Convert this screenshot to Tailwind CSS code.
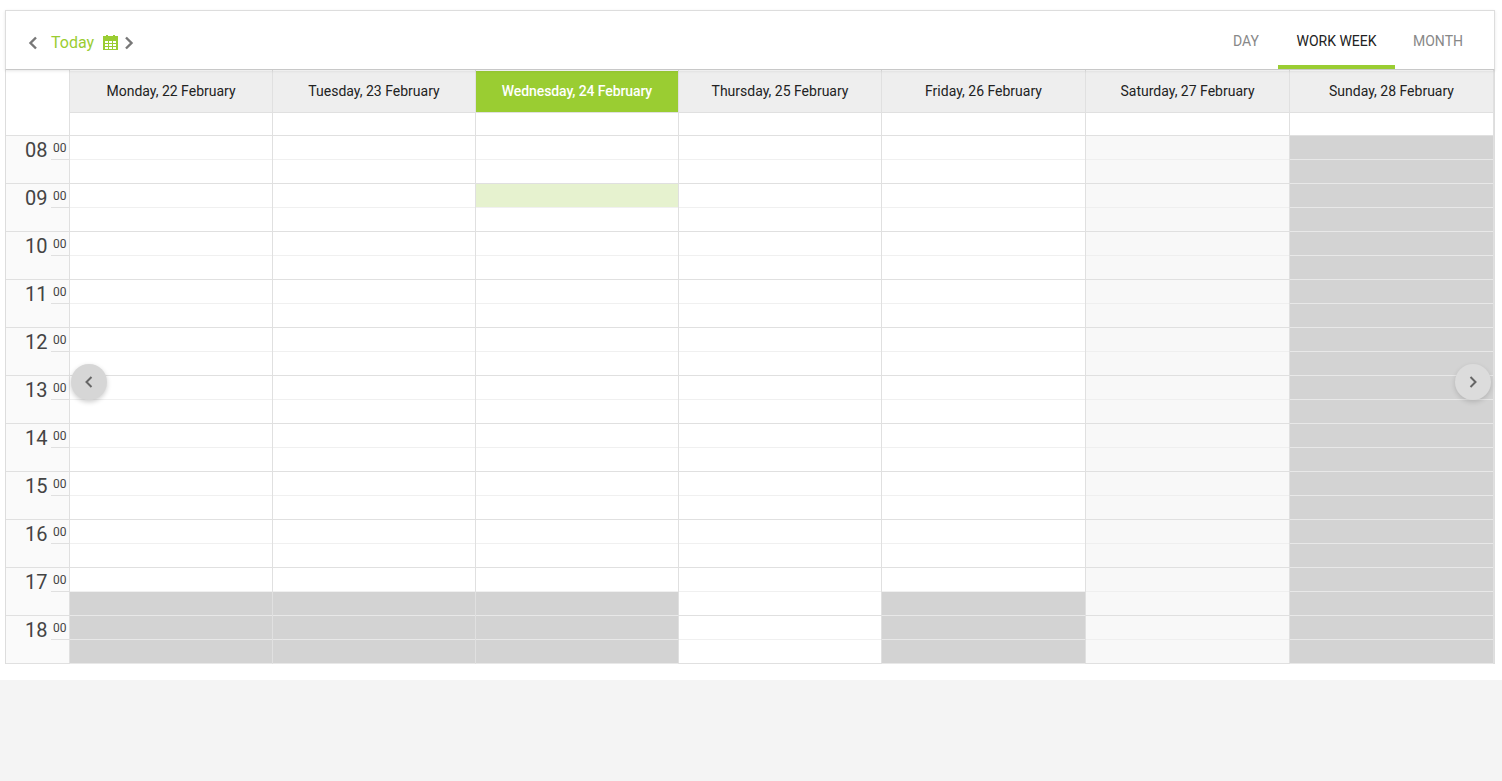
<!DOCTYPE html>
<html lang="en">

<head>
    <meta charset="UTF-8">
    <meta name="viewport" content="width=device-width, initial-scale=1.0">
    <title>Scheduler</title>
    <script src="https://cdn.jsdelivr.net/npm/@tailwindcss/browser@4"></script>
</head>

<body class="bg-[#f4f4f4] font-[Roboto,sans-serif] overflow-hidden">
    <div class="relative h-[680px] bg-white pt-[10px] px-[5px]">

        <!-- toolbar -->
        <div class="relative z-10 flex justify-between h-[60px] w-[1490px] bg-white border border-[#dddddd] border-b-[#c8c8c8] shadow-[0_1px_3px_rgba(0,0,0,0.1)]">
            <div class="flex items-center pl-[22px] pt-[6px] h-full">
                <svg class="w-[10px] h-[14px]" viewBox="0 0 10 14" fill="none" stroke="#777777" stroke-width="2.4">
                    <polyline points="8,1.5 2.5,7 8,12.5"></polyline>
                </svg>
                <span class="ml-[13px] text-[16px] text-[#9acd32]">Today</span>
                <svg class="ml-[9px] -mt-[1px] w-[15px] h-[15px]" viewBox="0 0 15 15">
                    <rect x="0" y="1" width="15" height="14" fill="#9acd32"></rect>
                    <rect x="3" y="0" width="2" height="3" fill="#9acd32"></rect>
                    <rect x="10" y="0" width="2" height="3" fill="#9acd32"></rect>
                    <g fill="#ffffff">
                        <rect x="2" y="6" width="3" height="2"></rect>
                        <rect x="6" y="6" width="3" height="2"></rect>
                        <rect x="10" y="6" width="3" height="2"></rect>
                        <rect x="2" y="9" width="3" height="2"></rect>
                        <rect x="6" y="9" width="3" height="2"></rect>
                        <rect x="10" y="9" width="3" height="2"></rect>
                        <rect x="2" y="12" width="3" height="2"></rect>
                        <rect x="6" y="12" width="3" height="2"></rect>
                        <rect x="10" y="12" width="3" height="2"></rect>
                    </g>
                </svg>
                <svg class="ml-[6px] w-[10px] h-[14px]" viewBox="0 0 10 14" fill="none" stroke="#777777" stroke-width="2.4">
                    <polyline points="2,1.5 7.5,7 2,12.5"></polyline>
                </svg>
            </div>
            <div class="flex h-full text-[14px] pr-[13px]">
                <div class="px-[19px] pt-[20px] text-[#888888]">DAY</div>
                <div class="w-[117px] pt-[20px] text-center text-[#222222] border-b-[4px] border-[#9acd32]">WORK WEEK</div>
                <div class="px-[18px] pt-[20px] text-[#888888]">MONTH</div>
            </div>
        </div>

        <!-- grid, filled in below -->
        <div id="grid" class="flex w-[1490px] border-l border-r border-[#dddddd]"></div>

        <!-- side arrows -->
        <div class="absolute left-[71px] top-[364px] z-20 flex items-center justify-center w-[36px] h-[36px] rounded-full bg-[#d6d6d6] shadow-[0_2px_5px_rgba(0,0,0,0.2)]">
            <svg class="w-[10px] h-[14px]" viewBox="0 0 10 14" fill="none" stroke="#666666" stroke-width="2">
                <polyline points="7.5,2 2.5,7 7.5,12"></polyline>
            </svg>
        </div>
        <div class="absolute left-[1455px] top-[364px] z-20 flex items-center justify-center w-[36px] h-[36px] rounded-full bg-[#dcdcdc] shadow-[0_2px_5px_rgba(0,0,0,0.15)]">
            <svg class="w-[10px] h-[14px]" viewBox="0 0 10 14" fill="none" stroke="#666666" stroke-width="2">
                <polyline points="2.5,2 7.5,7 2.5,12"></polyline>
            </svg>
        </div>
    </div>

    <script>
        var days = [
            { name: "Monday, 22 February", width: "w-[203px]", type: "work" },
            { name: "Tuesday, 23 February", width: "w-[203px]", type: "work" },
            { name: "Wednesday, 24 February", width: "w-[203px]", type: "work", today: true },
            { name: "Thursday, 25 February", width: "w-[203px]", type: "long" },
            { name: "Friday, 26 February", width: "w-[204px]", type: "work" },
            { name: "Saturday, 27 February", width: "w-[204px]", type: "sat" },
            { name: "Sunday, 28 February", width: "w-[204px]", type: "off" }
        ];

        var html = '<div class="w-[64px] shrink-0 border-r border-[#e0e0e0] bg-[#fafafa]">';
        html += '<div class="h-[66px] bg-white border-b border-[#e0e0e0]"></div>';
        for (var h = 8; h <= 18; h++) {
            html += '<div class="flex h-[48px] border-b border-[#e0e0e0] pl-[19px] text-[#444444]">';
            html += '<span class="w-[26px] pt-[2px] text-[20px] leading-[24px]">' + (h < 10 ? "0" + h : h) + '</span>';
            html += '<span class="w-[18px] h-[24px] pl-[2px] pt-[5px] text-[12px] leading-[14px] border-b border-[#e0e0e0]">00</span>';
            html += '</div>';
        }
        html += '</div>';

        days.forEach(function (day) {
            html += '<div class="shrink-0 border-r border-[#e0e0e0] ' + day.width + '">';
            if (day.today) {
                html += '<div class="flex items-center justify-center h-[43px] bg-[#9acd32] border-t border-t-white border-b border-b-[#e0e0e0] text-[14px] font-medium tracking-[-0.1px] text-white">' + day.name + '</div>';
            } else {
                html += '<div class="flex items-center justify-center h-[43px] bg-[#eeeeee] border-t border-t-white border-b border-b-[#e0e0e0] text-[14px] text-[#222222]">' + day.name + '</div>';
            }
            html += '<div class="h-[23px] bg-white border-b border-[#e0e0e0]"></div>';
            for (var s = 0; s < 22; s++) {
                var off = day.type === "off" || (day.type === "work" && s >= 19);
                var line = s % 2 === 0;
                var cls;
                if (off) {
                    cls = "bg-[#d3d3d3] border-[#e8e8e8]";
                } else if (day.today && s === 2) {
                    cls = "bg-[#e6f2cf] border-[#f0f0f0]";
                } else if (day.type === "sat") {
                    cls = line ? "bg-[#f8f8f8] border-[#efefef]" : "bg-[#f8f8f8] border-[#e0e0e0]";
                } else {
                    cls = line ? "bg-white border-[#f0f0f0]" : "bg-white border-[#e0e0e0]";
                }
                html += '<div class="h-[24px] border-b ' + cls + '"></div>';
            }
            html += '</div>';
        });

        document.getElementById("grid").innerHTML = html;
    </script>
</body>

</html>
